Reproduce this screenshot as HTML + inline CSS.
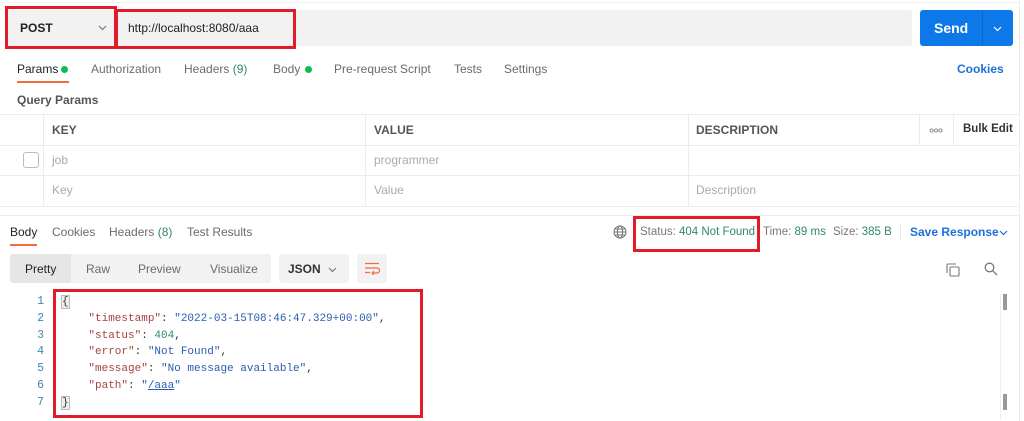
<!DOCTYPE html>
<html><head><meta charset="utf-8"><style>
*{margin:0;padding:0;box-sizing:border-box}
body{width:1024px;height:421px;background:#fff;font-family:"Liberation Sans",sans-serif;position:relative;overflow:hidden;color:#212121}
.a{position:absolute;white-space:nowrap}
.t{font-size:12px;color:#6b6b6b}
.mono{font-family:"Liberation Mono",monospace;font-size:11px}
.k{color:#a5433a}.s{color:#2a5db0}.n{color:#2f8a65}
.hl{position:absolute;height:1px;background:#ececec}
.vl{position:absolute;width:1px;background:#ececec}
</style></head><body>
<div class="hl" style="left:0;top:2px;width:1019px;background:#f0f0f0"></div>
<div class="vl" style="left:1019px;top:0;height:421px"></div>
<div class="a" style="left:8px;top:10px;width:904px;height:36px;background:#f2f2f2;border-radius:3px"></div>
<div class="vl" style="left:115px;top:10px;height:36px;background:#ddd"></div>
<div class="a" style="left:20px;top:21px;font-size:12px;font-weight:bold;color:#212121">POST</div>
<svg class="a" style="left:98px;top:25px" width="9" height="6"><path d="M1 1l3.5 3.5L8 1" fill="none" stroke="#777" stroke-width="1.2"/></svg>
<div class="a" style="left:128px;top:21px;font-size:12px;color:#212121">http://localhost:8080/aaa</div>
<div class="a" style="left:5px;top:6px;width:112px;height:43px;border:3px solid #e21b2a"></div>
<div class="a" style="left:115px;top:9px;width:181px;height:40px;border:3px solid #e21b2a"></div>
<div class="a" style="left:920px;top:10px;width:93px;height:36px;background:#0d78e8;border-radius:3px"></div>
<div class="vl" style="left:982px;top:10px;height:36px;background:#0b67c8"></div>
<div class="a" style="left:934px;top:20px;font-size:14px;font-weight:bold;color:#fff">Send</div>
<svg class="a" style="left:993px;top:26px" width="9" height="6"><path d="M1 1l3.5 3.5L8 1" fill="none" stroke="#fff" stroke-width="1.2"/></svg>
<div class="a" style="left:17px;top:62px;font-size:12px;color:#212121">Params</div>
<div class="a" style="left:61px;top:66px;width:7px;height:7px;border-radius:50%;background:#0cbb52"></div>
<div class="a" style="left:17px;top:81px;width:52px;height:2px;background:#f26b3a"></div>
<div class="a t" style="left:91px;top:62px">Authorization</div>
<div class="a t" style="left:184px;top:62px">Headers <span style="color:#2f8a65">(9)</span></div>
<div class="a t" style="left:273px;top:62px">Body</div>
<div class="a" style="left:305px;top:66px;width:7px;height:7px;border-radius:50%;background:#0cbb52"></div>
<div class="a t" style="left:334px;top:62px">Pre-request Script</div>
<div class="a t" style="left:454px;top:62px">Tests</div>
<div class="a t" style="left:504px;top:62px">Settings</div>
<div class="a" style="left:957px;top:62px;font-size:12px;font-weight:bold;color:#1f6fdb">Cookies</div>
<div class="a" style="left:17px;top:93px;font-size:12px;font-weight:bold;color:#555">Query Params</div>
<div class="hl" style="left:0;top:114px;width:1019px"></div>
<div class="hl" style="left:0;top:145px;width:1019px"></div>
<div class="hl" style="left:0;top:175px;width:1019px"></div>
<div class="hl" style="left:0;top:206px;width:1019px"></div>
<div class="vl" style="left:43px;top:114px;height:92px"></div>
<div class="vl" style="left:365px;top:114px;height:92px"></div>
<div class="vl" style="left:688px;top:114px;height:92px"></div>
<div class="vl" style="left:919px;top:114px;height:31px"></div>
<div class="vl" style="left:953px;top:114px;height:31px"></div>
<div class="a" style="left:52px;top:123px;font-size:12px;font-weight:bold;color:#555">KEY</div>
<div class="a" style="left:374px;top:123px;font-size:12px;font-weight:bold;color:#555">VALUE</div>
<div class="a" style="left:696px;top:123px;font-size:12px;font-weight:bold;color:#555">DESCRIPTION</div>
<svg class="a" style="left:929px;top:128px" width="14" height="5" fill="none" stroke="#888" stroke-width="0.9"><circle cx="2.5" cy="2.5" r="1.6"/><circle cx="7" cy="2.5" r="1.6"/><circle cx="11.5" cy="2.5" r="1.6"/></svg>
<div class="a" style="left:963px;top:123px;font-size:11.5px;font-weight:bold;color:#333">Bulk Edit</div>
<div class="a" style="left:23px;top:152px;width:16px;height:16px;border:1px solid #bbb;border-radius:3px"></div>
<div class="a" style="left:52px;top:153px;font-size:12px;color:#aaa">job</div>
<div class="a" style="left:374px;top:153px;font-size:12px;color:#aaa">programmer</div>
<div class="a" style="left:52px;top:183px;font-size:12px;color:#aaa">Key</div>
<div class="a" style="left:374px;top:183px;font-size:12px;color:#aaa">Value</div>
<div class="a" style="left:696px;top:183px;font-size:12px;color:#aaa">Description</div>
<div class="hl" style="left:0;top:215px;width:1019px"></div>
<div class="a" style="left:10px;top:225px;font-size:12px;color:#212121">Body</div>
<div class="a" style="left:10px;top:244px;width:27px;height:2px;background:#f26b3a"></div>
<div class="a t" style="left:52px;top:225px">Cookies</div>
<div class="a t" style="left:109px;top:225px">Headers <span style="color:#2f8a65">(8)</span></div>
<div class="a t" style="left:187px;top:225px">Test Results</div>
<svg class="a" style="left:613px;top:225px" width="14" height="14" viewBox="0 0 14 14" fill="none" stroke="#777" stroke-width="1.1"><circle cx="7" cy="7" r="6"/><ellipse cx="7" cy="7" rx="2.6" ry="6"/><path d="M1 7h12M2 4h10M2 10h10"/></svg>
<div class="a" style="left:640px;top:226px;font-size:11.5px;color:#777">Status: <span style="color:#2f8a65">404 Not Found</span></div>
<div class="a" style="left:633px;top:216px;width:127px;height:36px;border:3px solid #e21b2a"></div>
<div class="a" style="left:763px;top:226px;font-size:11.5px;color:#777">Time: <span style="color:#2f8a65">89 ms</span></div>
<div class="a" style="left:833px;top:226px;font-size:11.5px;color:#777">Size: <span style="color:#2f8a65">385 B</span></div>
<div class="vl" style="left:900px;top:223px;height:18px"></div>
<div class="a" style="left:910px;top:225px;font-size:12px;font-weight:bold;color:#1f6fdb">Save Response</div>
<svg class="a" style="left:999px;top:230px" width="9" height="6"><path d="M1 1l3.5 3.5L8 1" fill="none" stroke="#1f6fdb" stroke-width="1.2"/></svg>
<div class="a" style="left:10px;top:254px;width:261px;height:29px;background:#f2f2f2;border-radius:3px"></div>
<div class="a" style="left:10px;top:254px;width:61px;height:29px;background:#e6e6e6;border-radius:3px 0 0 3px"></div>
<div class="a" style="left:25px;top:262px;font-size:12px;color:#212121">Pretty</div>
<div class="a t" style="left:86px;top:262px">Raw</div>
<div class="a t" style="left:138px;top:262px">Preview</div>
<div class="a t" style="left:210px;top:262px">Visualize</div>
<div class="a" style="left:279px;top:254px;width:70px;height:29px;background:#f2f2f2;border-radius:3px"></div>
<div class="a" style="left:288px;top:262px;font-size:12px;font-weight:bold;color:#333">JSON</div>
<svg class="a" style="left:328px;top:267px" width="9" height="6"><path d="M1 1l3.5 3.5L8 1" fill="none" stroke="#777" stroke-width="1.2"/></svg>
<div class="a" style="left:357px;top:254px;width:30px;height:29px;background:#f2f2f2;border-radius:3px"></div>
<svg class="a" style="left:364px;top:262px" width="16" height="13" fill="none" stroke="#f26b3a" stroke-width="1.2"><path d="M1 1.5h14M1 6h12a2.5 2.5 0 0 1 0 5H9M1 10.5h5M10 9l-2 2 2 2"/></svg>
<svg class="a" style="left:946px;top:263px" width="14" height="14" fill="none" stroke="#777" stroke-width="1.1"><rect x="4" y="4" width="9" height="9" rx="1"/><path d="M10 1H2a1 1 0 0 0-1 1v8"/></svg>
<svg class="a" style="left:984px;top:262px" width="14" height="14" fill="none" stroke="#777" stroke-width="1.3"><circle cx="5.5" cy="5.5" r="4.3"/><path d="M8.8 8.8L13 13"/></svg>
<div class="a mono" style="left:36px;top:294px;color:#3a8ab0;line-height:16.8px;text-align:right;width:8px;font-size:11.5px">1<br>2<br>3<br>4<br>5<br>6<br>7</div>
<div class="a mono" style="left:62px;top:294px;line-height:16.8px;color:#333">
<span style="background:#eef0e8;outline:1px solid #bbb">{</span><br>
&nbsp;&nbsp;&nbsp;&nbsp;<span class="k">"timestamp"</span>: <span class="s">"2022-03-15T08:46:47.329+00:00"</span>,<br>
&nbsp;&nbsp;&nbsp;&nbsp;<span class="k">"status"</span>: <span class="n">404</span>,<br>
&nbsp;&nbsp;&nbsp;&nbsp;<span class="k">"error"</span>: <span class="s">"Not Found"</span>,<br>
&nbsp;&nbsp;&nbsp;&nbsp;<span class="k">"message"</span>: <span class="s">"No message available"</span>,<br>
&nbsp;&nbsp;&nbsp;&nbsp;<span class="k">"path"</span>: <span class="s">"<u>/aaa</u>"</span><br>
<span style="background:#eef0e8;outline:1px solid #bbb">}</span></div>
<div class="a" style="left:53px;top:289px;width:370px;height:129px;border:3px solid #e21b2a"></div>
<div class="vl" style="left:1000px;top:294px;height:126px;background:#eee"></div>
<div class="a" style="left:1003px;top:294px;width:4px;height:16px;background:#999"></div>
<div class="a" style="left:1003px;top:394px;width:4px;height:16px;background:#999"></div>
</body></html>
